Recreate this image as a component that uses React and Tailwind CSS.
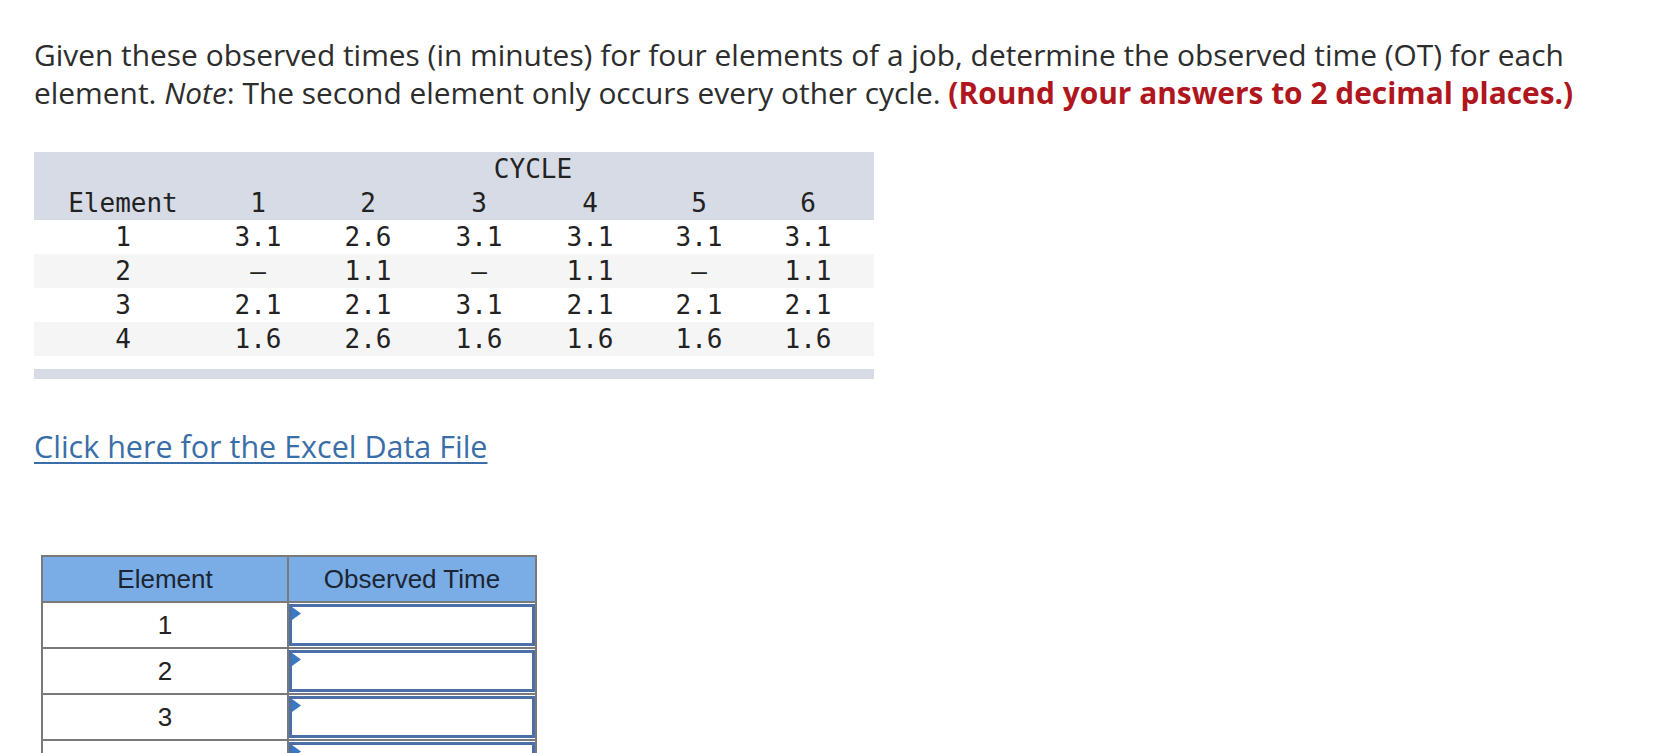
import React from "react";

const data = [
  ["1", "3.1", "2.6", "3.1", "3.1", "3.1", "3.1"],
  ["2", "–", "1.1", "–", "1.1", "–", "1.1"],
  ["3", "2.1", "2.1", "3.1", "2.1", "2.1", "2.1"],
  ["4", "1.6", "2.6", "1.6", "1.6", "1.6", "1.6"],
];

const cols = "grid grid-cols-[169px_110px_110px_112px_110px_108px_110px_1fr]";

function Triangle() {
  return (
    <svg className="absolute left-0 top-0" width="9" height="13" viewBox="0 0 9 13">
      <polygon points="0,0 9,6.5 0,13" fill="#3a78c3" />
    </svg>
  );
}

export default function App() {
  return (
    <div className="min-h-[753px] w-[1676px] bg-white pl-[34px] pt-[36px]">
      <p
        className="w-[1600px] text-[29.9px] leading-[38px] text-[#2d2d2d]"
        style={{ fontFamily: "'Open Sans', sans-serif" }}
      >
        Given these observed times (in minutes) for four elements of a job, determine the observed time (OT) for each
        <br />
        element. <em>Note</em>: The second element only occurs every other cycle.{" "}
        <strong className="font-bold text-[#b0161e]">(Round your answers to 2 decimal places.)</strong>
      </p>

      <div
        className="mt-[40px] w-[840px] text-[26px] leading-[34px] text-[#222]"
        style={{ fontFamily: "'DejaVu Sans Mono', monospace" }}
      >
        <div className="bg-[#d6dbe6]">
          <div className={cols}>
            <div className="h-[34px]"></div>
            <div className="col-span-7 h-[34px] pr-[11px] text-center">CYCLE</div>
          </div>
          <div className={cols}>
            <div className="h-[34px] pl-[9px] text-center">Element</div>
            {["1", "2", "3", "4", "5", "6"].map((c) => (
              <div key={c} className="h-[34px] text-center">
                {c}
              </div>
            ))}
            <div></div>
          </div>
        </div>
        {data.map((row, i) => (
          <div key={i} className={`${cols} ${i % 2 === 1 ? "bg-[#f5f5f5]" : "bg-white"}`}>
            {row.map((v, j) => (
              <div key={j} className={`h-[34px] text-center ${j === 0 ? "pl-[9px]" : ""}`}>
                {v}
              </div>
            ))}
            <div></div>
          </div>
        ))}
        <div className="mt-[13px] h-[10px] bg-[#d6dbe6]"></div>
      </div>

      <a
        href="#"
        className="mt-[48px] inline-block text-[30.5px] leading-[38px] text-[#3a6ea8] underline decoration-[2px] underline-offset-[4px]"
        style={{ fontFamily: "'Open Sans', sans-serif" }}
      >
        Click here for the Excel Data File
      </a>

      <div
        className="ml-[7px] mt-[90px] grid w-[496px] grid-cols-[244px_246px] gap-[2px] border-2 border-[#7a7a7a] bg-[#7a7a7a] text-[26px]"
        style={{ fontFamily: "'Liberation Sans', Arial, sans-serif" }}
      >
        <div className="flex h-[44px] items-center justify-center bg-[#7aade5] text-[#1c2533]">Element</div>
        <div className="flex h-[44px] items-center justify-center bg-[#7aade5] text-[#1c2533]">Observed Time</div>
        {["1", "2", "3", "4"].map((n) => (
          <React.Fragment key={n}>
            <div className="flex h-[44px] items-center justify-center bg-white text-[#222]">{n}</div>
            <div className="h-[44px] bg-white py-[1px]">
              <div className="relative h-full border-[3px] border-[#4b70a8] bg-white">
                <Triangle />
              </div>
            </div>
          </React.Fragment>
        ))}
      </div>
    </div>
  );
}
